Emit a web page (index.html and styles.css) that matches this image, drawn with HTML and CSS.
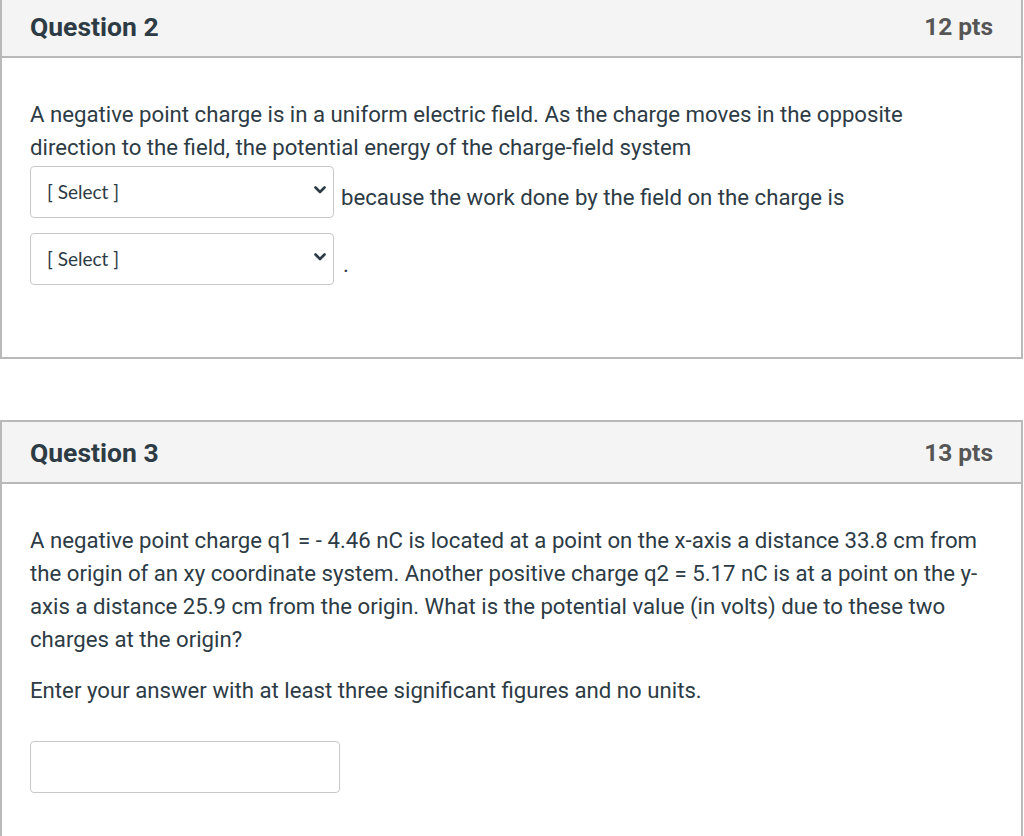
FILE: index.html
```html
<!DOCTYPE html>
<html>
<head>
<meta charset="utf-8">
<link rel="stylesheet" href="styles.css">
</head>
<body>
<div class="page">
  <section class="card card-first">
    <header class="card-head">
      <h2 class="q-title">Question 2</h2>
      <span class="q-pts">12 pts</span>
    </header>
    <div class="card-body q2-body">
      <p class="text">A negative point charge is in a uniform electric field. As the charge moves in the opposite direction to the field, the potential energy of the charge-field system</p>
      <div class="sel-row">
        <div class="select"><span class="select-label">[ Select ]</span><svg class="chev" width="12" height="8" viewBox="0 0 12 8"><path d="M1.5 1.5 L6 6 L10.5 1.5" fill="none" stroke="#2d3b45" stroke-width="2.6" stroke-linecap="round" stroke-linejoin="round"/></svg></div>
        <span class="after">because the work done by the field on the charge is</span>
      </div>
      <div class="sel-row">
        <div class="select"><span class="select-label">[ Select ]</span><svg class="chev" width="12" height="8" viewBox="0 0 12 8"><path d="M1.5 1.5 L6 6 L10.5 1.5" fill="none" stroke="#2d3b45" stroke-width="2.6" stroke-linecap="round" stroke-linejoin="round"/></svg></div>
        <span class="after dot">.</span>
      </div>
    </div>
  </section>

  <section class="card">
    <header class="card-head">
      <h2 class="q-title">Question 3</h2>
      <span class="q-pts">13 pts</span>
    </header>
    <div class="card-body q3-body">
      <p class="text">A negative point charge q1 = - 4.46 nC is located at a point on the x-axis a distance 33.8 cm from the origin of an xy coordinate system. Another positive charge q2 = 5.17 nC is at a point on the y-axis a distance 25.9 cm from the origin. What is the potential value (in volts) due to these two charges at the origin?</p>
      <p class="text text-2">Enter your answer with at least three significant figures and no units.</p>
      <div class="answer"></div>
    </div>
  </section>
</div>
</body>
</html>
```

FILE: styles.css
```css
html, body {
  margin: 0;
  padding: 0;
  background: #ffffff;
}
body {
  font-family: Roboto, "Liberation Sans", sans-serif;
  color: #2d3b45;
  overflow: hidden;
}
.page {
  width: 1023px;
}
.card {
  border: 2px solid #b9b9b9;
  margin-bottom: 61px;
}
.card-first {
  margin-top: -6px;
}
.card-head {
  background: #f4f4f4;
  border-bottom: 2px solid #b9b9b9;
  height: 60px;
  display: flex;
  align-items: center;
  justify-content: space-between;
  padding: 0 28px;
}
.q-title {
  margin: 0;
  font-size: 26.5px;
  font-weight: 700;
  color: #2d3b45;
}
.q-pts {
  font-size: 24.5px;
  font-weight: 700;
  color: #565656;
}
.card-body {
  padding: 40px 36px 0 28px;
}
.q2-body {
  height: 299px;
  box-sizing: border-box;
}
.q3-body {
  height: 400px;
  box-sizing: border-box;
}
.text {
  margin: 0;
  font-size: 22.2px;
  line-height: 33px;
}
.text-2 {
  margin-top: 18px;
}
.sel-row {
  display: flex;
  align-items: flex-start;
  margin-top: 2px;
}
.sel-row + .sel-row {
  margin-top: 15px;
}
.select {
  width: 304px;
  height: 52px;
  box-sizing: border-box;
  border: 1px solid #c8c8c8;
  border-radius: 4px;
  display: flex;
  align-items: flex-start;
  justify-content: space-between;
  padding: 0 7px 0 16px;
  background: #fff;
}
.select-label {
  font-family: Lato, "Liberation Sans", sans-serif;
  font-size: 19px;
  line-height: 50px;
  color: #2d3b45;
}
.chev {
  margin-top: 19px;
}
.after {
  font-size: 22.2px;
  line-height: 33px;
  margin-top: 15px;
  margin-left: 7px;
}
.dot {
  margin-left: 9px;
}
.answer {
  margin-top: 34px;
  width: 310px;
  height: 52px;
  box-sizing: border-box;
  border: 1px solid #c8c8c8;
  border-radius: 4px;
}
```
